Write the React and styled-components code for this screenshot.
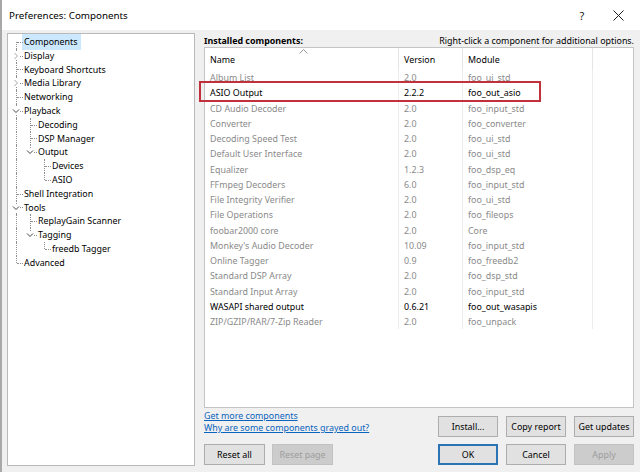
import React from 'react'
import styled, { createGlobalStyle, css } from 'styled-components'

const GlobalStyle = createGlobalStyle`
  html, body {
    margin: 0;
    padding: 0;
    background: #ffffff;
  }
  body {
    font-family: "Noto Sans", "DejaVu Sans", sans-serif;
    font-size: 8.9px;
    color: #000;
  }
`

const treeItems = [
  { label: 'Components', depth: 0, selected: true },
  { label: 'Display', depth: 0, toggle: 'closed' },
  { label: 'Keyboard Shortcuts', depth: 0 },
  { label: 'Media Library', depth: 0, toggle: 'closed' },
  { label: 'Networking', depth: 0 },
  { label: 'Playback', depth: 0, toggle: 'open' },
  { label: 'Decoding', depth: 1 },
  { label: 'DSP Manager', depth: 1 },
  { label: 'Output', depth: 1, toggle: 'open' },
  { label: 'Devices', depth: 2 },
  { label: 'ASIO', depth: 2 },
  { label: 'Shell Integration', depth: 0 },
  { label: 'Tools', depth: 0, toggle: 'open' },
  { label: 'ReplayGain Scanner', depth: 1 },
  { label: 'Tagging', depth: 1, toggle: 'open' },
  { label: 'freedb Tagger', depth: 2 },
  { label: 'Advanced', depth: 0 },
]

const components = [
  ['Album List', '2.0', 'foo_ui_std'],
  ['ASIO Output', '2.2.2', 'foo_out_asio', true],
  ['CD Audio Decoder', '2.0', 'foo_input_std'],
  ['Converter', '2.0', 'foo_converter'],
  ['Decoding Speed Test', '2.0', 'foo_ui_std'],
  ['Default User Interface', '2.0', 'foo_ui_std'],
  ['Equalizer', '1.2.3', 'foo_dsp_eq'],
  ['FFmpeg Decoders', '6.0', 'foo_input_std'],
  ['File Integrity Verifier', '2.0', 'foo_ui_std'],
  ['File Operations', '2.0', 'foo_fileops'],
  ['foobar2000 core', '2.0', 'Core'],
  ["Monkey's Audio Decoder", '10.09', 'foo_input_std'],
  ['Online Tagger', '0.9', 'foo_freedb2'],
  ['Standard DSP Array', '2.0', 'foo_dsp_std'],
  ['Standard Input Array', '2.0', 'foo_input_std'],
  ['WASAPI shared output', '0.6.21', 'foo_out_wasapis', true],
  ['ZIP/GZIP/RAR/7-Zip Reader', '2.0', 'foo_unpack'],
]

// does the item at index i have a later sibling?
const hasNext = (i) => {
  const d = treeItems[i].depth
  for (let j = i + 1; j < treeItems.length; j++) {
    if (treeItems[j].depth < d) return false
    if (treeItems[j].depth === d) return true
  }
  return false
}

const ancestorAt = (i, level) => {
  for (let j = i - 1; j >= 0; j--) {
    if (treeItems[j].depth === level) return j
  }
  return -1
}

const Window = styled.div`
  width: 640px;
  height: 472px;
  box-sizing: border-box;
  border-left: 2px solid #a8a8a8;
  background: #f0f0f0;
  display: flex;
  flex-direction: column;
  overflow: hidden;
`

const TitleBar = styled.div`
  height: 30px;
  flex-shrink: 0;
  background: #ffffff;
  display: flex;
  align-items: center;
  padding-left: 7px;
  padding-right: 4px;
`

const Title = styled.div`
  font-size: 9.8px;
  flex: 1;
`

const Caption = styled.div`
  width: 36px;
  height: 30px;
  display: flex;
  align-items: center;
  justify-content: center;
  font-size: 11px;
  color: #222;
`

const Body = styled.div`
  flex: 1;
  display: flex;
  padding: 3px 6px 6px 5px;
  gap: 9px;
`

const TreePanel = styled.div`
  width: 188px;
  box-sizing: border-box;
  background: #fff;
  border: 1px solid #b9b9b9;
  padding: 1px 0 0 1px;
`

const TreeRow = styled.div`
  display: flex;
  height: 13.8px;
  align-items: stretch;
  white-space: nowrap;
`

const Cell = styled.div`
  position: relative;
  width: 14px;
  flex-shrink: 0;
`

const VLine = styled.div`
  position: absolute;
  left: 7px;
  width: 0;
  border-left: 1px dotted #8f8f8f;
  top: ${(p) => (p.$from === 'mid' ? '50%' : '0')};
  bottom: ${(p) => (p.$to === 'mid' ? '50%' : '0')};
`

const HLine = styled.div`
  position: absolute;
  left: 8px;
  right: 0;
  top: 50%;
  height: 0;
  border-top: 1px dotted #8f8f8f;
`

const Toggle = styled.svg`
  position: absolute;
  left: 3px;
  top: 3px;
  background: #fff;
`

const TreeLabel = styled.span`
  line-height: 13.8px;
  padding: 0 2px 0 1px;
  ${(p) =>
    p.$selected &&
    css`
      background: #cce8ff;
      outline: 1px solid #cce8ff;
    `}
`

const RightPanel = styled.div`
  width: 430px;
  display: flex;
  flex-direction: column;
`

const HeadingRow = styled.div`
  height: 14px;
  display: flex;
  align-items: center;
  justify-content: space-between;
`

const Heading = styled.span`
  font-weight: 700;
`

const ListWrap = styled.div`
  position: relative;
  height: 361px;
  box-sizing: border-box;
  background: #fff;
  border: 1px solid #c4c4c4;
`

const ColGrid = styled.div`
  display: grid;
  grid-template-columns: 194px 64px 130px 1fr;
`

const Header = styled(ColGrid)`
  height: 22px;
  position: relative;
`

const HeadCell = styled.div`
  display: flex;
  align-items: center;
  padding-left: 5px;
  border-right: 1px solid #e5e5e5;
`

const SortArrow = styled.svg`
  position: absolute;
  left: 94px;
  top: 1px;
`

const Row = styled(ColGrid)`
  height: 15.25px;
  color: ${(p) => (p.$active ? '#000' : '#8a8a8a')};
`

const Cellx = styled.div`
  padding-left: 5px;
  line-height: 15.25px;
  white-space: nowrap;
  border-right: 1px solid #ececec;
`

const Highlight = styled.div`
  position: absolute;
  left: -6px;
  top: 33px;
  width: 342px;
  height: 21px;
  box-sizing: border-box;
  border: 2px solid #c0313c;
`

const Footer = styled.div`
  display: grid;
  grid-template-columns: 1fr 60px 60px 60px;
  grid-template-rows: 29px 21px;
  column-gap: 8px;
  row-gap: 7px;
`

const Links = styled.div`
  display: flex;
  flex-direction: column;
  line-height: 12px;
  padding-top: 2px;
`

const LinkText = styled.a`
  color: #0a64bd;
  text-decoration: underline;
  width: fit-content;
`

const Btn = styled.button`
  height: 21px;
  width: ${(p) => p.$w || '60px'};
  box-sizing: border-box;
  font-family: inherit;
  font-size: inherit;
  padding: 0;
  align-self: end;
  background: ${(p) => (p.disabled ? '#cccccc' : '#e1e1e1')};
  color: ${(p) => (p.disabled ? '#9c9c9c' : '#000')};
  border: 1px solid ${(p) => (p.$focus ? '#2a74b6' : p.disabled ? '#c2c2c2' : '#adadad')};
  ${(p) => p.$focus && css`box-shadow: inset 0 0 0 1px #2a74b6;`}
`

const LeftButtons = styled.div`
  display: flex;
  gap: 7px;
`

const Chevron = ({ open }) => (
  <Toggle width="8" height="8" viewBox="0 0 8 8">
    {open ? (
      <path d="M1 2.5 L4 5.5 L7 2.5" fill="none" stroke="#444" strokeWidth="1" />
    ) : (
      <path d="M2.5 1 L5.5 4 L2.5 7" fill="none" stroke="#a6a6a6" strokeWidth="1" />
    )}
  </Toggle>
)

const TreeItem = ({ item, index }) => {
  const cells = []
  for (let level = 0; level < item.depth; level++) {
    const a = ancestorAt(index, level)
    cells.push(<Cell key={level}>{a >= 0 && hasNext(a) && <VLine />}</Cell>)
  }
  const next = hasNext(index)
  cells.push(
    <Cell key="own">
      <VLine $from={index === 0 ? 'mid' : 'top'} $to={next ? 'end' : 'mid'} />
      <HLine />
      {item.toggle && <Chevron open={item.toggle === 'open'} />}
    </Cell>
  )
  return (
    <TreeRow>
      {cells}
      <TreeLabel $selected={item.selected}>{item.label}</TreeLabel>
    </TreeRow>
  )
}

const CloseIcon = () => (
  <svg width="11" height="11" viewBox="0 0 11 11">
    <path d="M0.5 0.5 L10.5 10.5 M10.5 0.5 L0.5 10.5" stroke="#222" strokeWidth="1" />
  </svg>
)

const App = () => {
  return (
    <>
      <GlobalStyle />
      <Window>
        <TitleBar>
          <Title>Preferences: Components</Title>
          <Caption>?</Caption>
          <Caption>
            <CloseIcon />
          </Caption>
        </TitleBar>
        <Body>
          <TreePanel>
            {treeItems.map((item, i) => (
              <TreeItem key={item.label} item={item} index={i} />
            ))}
          </TreePanel>
          <RightPanel>
            <HeadingRow>
              <Heading>Installed components:</Heading>
              <span>Right-click a component for additional options.</span>
            </HeadingRow>
            <ListWrap>
              <Header>
                <HeadCell>Name</HeadCell>
                <HeadCell>Version</HeadCell>
                <HeadCell>Module</HeadCell>
                <div />
                <SortArrow width="9" height="5" viewBox="0 0 9 5">
                  <path d="M0.5 4.5 L4.5 0.5 L8.5 4.5" fill="none" stroke="#9a9a9a" strokeWidth="1" />
                </SortArrow>
              </Header>
              {components.map(([name, ver, mod, active]) => (
                <Row key={name} $active={active}>
                  <Cellx>{name}</Cellx>
                  <Cellx>{ver}</Cellx>
                  <Cellx>{mod}</Cellx>
                  <div />
                </Row>
              ))}
              <Highlight />
            </ListWrap>
            <Footer>
              <Links>
                <LinkText>Get more components</LinkText>
                <LinkText>Why are some components grayed out?</LinkText>
              </Links>
              <Btn>Install...</Btn>
              <Btn>Copy report</Btn>
              <Btn>Get updates</Btn>
              <LeftButtons>
                <Btn $w="61px">Reset all</Btn>
                <Btn $w="61px" disabled>
                  Reset page
                </Btn>
              </LeftButtons>
              <Btn $focus>OK</Btn>
              <Btn>Cancel</Btn>
              <Btn disabled>Apply</Btn>
            </Footer>
          </RightPanel>
        </Body>
      </Window>
    </>
  )
}

export default App
